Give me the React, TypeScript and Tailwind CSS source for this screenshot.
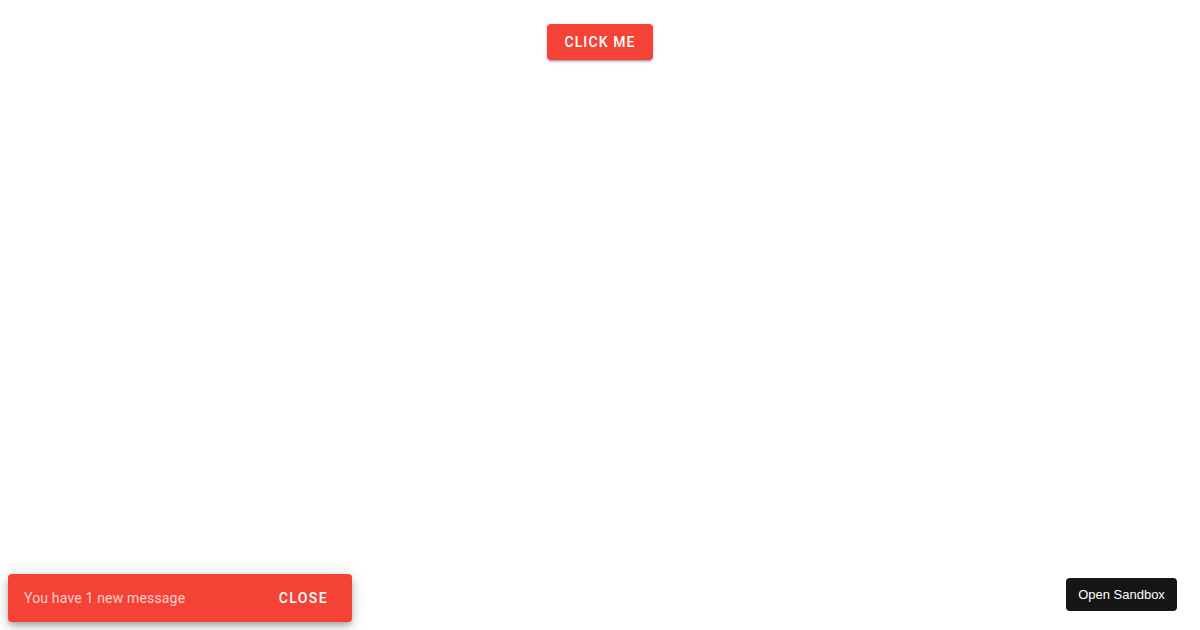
export default function App() {
  return (
    <div className="relative h-[630px] w-[1200px] overflow-hidden bg-white font-['Roboto',sans-serif]">
      <div className="flex justify-center pt-6">
        <button className="flex h-9 w-[106px] items-center justify-center rounded bg-[#f44336] text-sm font-medium uppercase tracking-[1.1px] text-white shadow-[0_3px_1px_-2px_rgba(0,0,0,0.2),0_2px_2px_0_rgba(0,0,0,0.14),0_1px_5px_0_rgba(0,0,0,0.12)]">
          Click me
        </button>
      </div>

      <div className="absolute bottom-2 left-2 flex h-12 w-[344px] items-center justify-between rounded bg-[#f44336] pl-4 pr-2 shadow-[0_3px_5px_-1px_rgba(0,0,0,0.2),0_6px_10px_0_rgba(0,0,0,0.14),0_1px_18px_0_rgba(0,0,0,0.12)]">
        <span className="text-sm tracking-[0.17px] text-white/75">
          You have 1 new message
        </span>
        <button className="flex h-9 items-center px-4 text-sm font-medium uppercase tracking-[1.4px] text-white">
          Close
        </button>
      </div>

      <div className="absolute bottom-[19px] right-[23px] flex h-[33px] w-[111px] items-center justify-center rounded bg-[#151515] font-['Liberation_Sans',sans-serif] text-[13px] text-white">
        Open Sandbox
      </div>
    </div>
  );
}
